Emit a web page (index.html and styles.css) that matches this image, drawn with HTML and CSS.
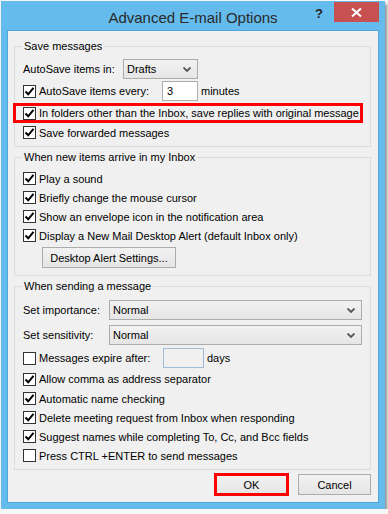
FILE: index.html
```html
<!DOCTYPE html>
<html lang="en">
<head>
    <meta charset="UTF-8">
    <title>Advanced E-mail Options</title>
    <link rel="stylesheet" href="styles.css">
</head>
<body>
    <div class="window">
        <div class="titlebar">
            <span></span>
            <div class="title">Advanced E-mail Options</div>
            <div class="controls">
                <span class="help">?</span>
                <span class="close">
                    <svg width="11" height="9" viewBox="0 0 11 9"><path d="M1 0.5 L10 8.5 M10 0.5 L1 8.5" stroke="#fff" stroke-width="2" fill="none"/></svg>
                </span>
            </div>
        </div>

        <div class="content">
            <fieldset class="group g1">
                <legend>Save messages</legend>
                <div class="row r-select">
                    <span class="lbl w100">AutoSave items in:</span>
                    <span class="select drafts">Drafts<svg class="arrow" width="8" height="5" viewBox="0 0 8 5"><path d="M0.5 0.5 L4 4 L7.5 0.5" stroke="#555" stroke-width="1.8" fill="none"/></svg></span>
                </div>
                <div class="row r-input">
                    <span class="box"><svg width="11" height="11" viewBox="0 0 11 11"><path d="M1.5 5.5 L4.2 8.3 L9.5 1.8" stroke="#000" stroke-width="2" fill="none"/></svg></span>
                    <span class="lbl w123">AutoSave items every:</span>
                    <span class="textbox">3</span>
                    <span class="lbl">minutes</span>
                </div>
                <div class="row highlight">
                    <span class="box"><svg width="11" height="11" viewBox="0 0 11 11"><path d="M1.5 5.5 L4.2 8.3 L9.5 1.8" stroke="#000" stroke-width="2" fill="none"/></svg></span>
                    <span class="lbl">In folders other than the Inbox, save replies with original message</span>
                </div>
                <div class="row">
                    <span class="box"><svg width="11" height="11" viewBox="0 0 11 11"><path d="M1.5 5.5 L4.2 8.3 L9.5 1.8" stroke="#000" stroke-width="2" fill="none"/></svg></span>
                    <span class="lbl">Save forwarded messages</span>
                </div>
            </fieldset>

            <fieldset class="group g2">
                <legend>When new items arrive in my Inbox</legend>
                <div class="row first">
                    <span class="box"><svg width="11" height="11" viewBox="0 0 11 11"><path d="M1.5 5.5 L4.2 8.3 L9.5 1.8" stroke="#000" stroke-width="2" fill="none"/></svg></span>
                    <span class="lbl">Play a sound</span>
                </div>
                <div class="row">
                    <span class="box"><svg width="11" height="11" viewBox="0 0 11 11"><path d="M1.5 5.5 L4.2 8.3 L9.5 1.8" stroke="#000" stroke-width="2" fill="none"/></svg></span>
                    <span class="lbl">Briefly change the mouse cursor</span>
                </div>
                <div class="row">
                    <span class="box"><svg width="11" height="11" viewBox="0 0 11 11"><path d="M1.5 5.5 L4.2 8.3 L9.5 1.8" stroke="#000" stroke-width="2" fill="none"/></svg></span>
                    <span class="lbl">Show an envelope icon in the notification area</span>
                </div>
                <div class="row">
                    <span class="box"><svg width="11" height="11" viewBox="0 0 11 11"><path d="M1.5 5.5 L4.2 8.3 L9.5 1.8" stroke="#000" stroke-width="2" fill="none"/></svg></span>
                    <span class="lbl">Display a New Mail Desktop Alert (default Inbox only)</span>
                </div>
                <div class="btn alert-btn">Desktop Alert Settings...</div>
            </fieldset>

            <fieldset class="group g3">
                <legend>When sending a message</legend>
                <div class="row r-select first">
                    <span class="lbl w86">Set importance:</span>
                    <span class="select wide">Normal<svg class="arrow" width="8" height="5" viewBox="0 0 8 5"><path d="M0.5 0.5 L4 4 L7.5 0.5" stroke="#555" stroke-width="1.8" fill="none"/></svg></span>
                </div>
                <div class="row r-select second">
                    <span class="lbl w86">Set sensitivity:</span>
                    <span class="select wide">Normal<svg class="arrow" width="8" height="5" viewBox="0 0 8 5"><path d="M0.5 0.5 L4 4 L7.5 0.5" stroke="#555" stroke-width="1.8" fill="none"/></svg></span>
                </div>
                <div class="row r-expire">
                    <span class="box"></span>
                    <span class="lbl w124">Messages expire after:</span>
                    <span class="textbox days"></span>
                    <span class="lbl">days</span>
                </div>
                <div class="row r-comma">
                    <span class="box"><svg width="11" height="11" viewBox="0 0 11 11"><path d="M1.5 5.5 L4.2 8.3 L9.5 1.8" stroke="#000" stroke-width="2" fill="none"/></svg></span>
                    <span class="lbl">Allow comma as address separator</span>
                </div>
                <div class="row">
                    <span class="box"><svg width="11" height="11" viewBox="0 0 11 11"><path d="M1.5 5.5 L4.2 8.3 L9.5 1.8" stroke="#000" stroke-width="2" fill="none"/></svg></span>
                    <span class="lbl">Automatic name checking</span>
                </div>
                <div class="row">
                    <span class="box"><svg width="11" height="11" viewBox="0 0 11 11"><path d="M1.5 5.5 L4.2 8.3 L9.5 1.8" stroke="#000" stroke-width="2" fill="none"/></svg></span>
                    <span class="lbl">Delete meeting request from Inbox when responding</span>
                </div>
                <div class="row">
                    <span class="box"><svg width="11" height="11" viewBox="0 0 11 11"><path d="M1.5 5.5 L4.2 8.3 L9.5 1.8" stroke="#000" stroke-width="2" fill="none"/></svg></span>
                    <span class="lbl">Suggest names while completing To, Cc, and Bcc fields</span>
                </div>
                <div class="row">
                    <span class="box"></span>
                    <span class="lbl">Press CTRL +ENTER to send messages</span>
                </div>
            </fieldset>

            <div class="actions">
                <div class="btn ok">OK</div>
                <div class="btn cancel">Cancel</div>
            </div>
        </div>
    </div>
</body>
</html>
```

FILE: styles.css
```css
* {
    margin: 0;
    padding: 0;
    box-sizing: border-box;
}

body {
    font-family: "Liberation Sans", Arial, sans-serif;
    font-size: 11px;
    color: #000;
    background-color: #f7f7f7;
    margin: 0;
    padding: 1px 0 0 1px;
}

.window {
    width: 384px;
    height: 508px;
    background-color: #65bbec;
    padding: 0 6px 6px 6px;
    box-shadow: 2px 3px 3px rgba(0, 0, 0, 0.45);
    display: flex;
    flex-direction: column;
}

.titlebar {
    height: 29px;
    display: grid;
    grid-template-columns: 1fr auto 1fr;
    margin: 0 -6px;
}

.title {
    font-size: 15px;
    color: #2a2a2a;
    line-height: 15px;
    padding-top: 9px;
}

.controls {
    display: flex;
    justify-content: flex-end;
    align-items: flex-start;
    padding-right: 6px;
}

.help {
    font-weight: bold;
    font-size: 13px;
    color: #222;
    line-height: 13px;
    margin-top: 6px;
    margin-right: 11px;
}

.close {
    width: 45px;
    height: 20px;
    margin-top: 1px;
    background-color: #c75050;
    display: flex;
    align-items: center;
    justify-content: center;
}

.content {
    flex: 1;
    background-color: #f0f0f0;
    border: 1px solid #4ea5d9;
    padding: 8px 7px 0 6px;
}

.group {
    border: 1px solid #dcdcdc;
    padding: 0 0 0 8px;
    min-width: 0;
}

.group legend {
    margin-left: -1px;
    padding: 0 2px;
    line-height: 14px;
}

.g1 {
    padding-bottom: 4px;
}

.g2 {
    margin-top: 3px;
    padding-bottom: 7px;
}

.g3 {
    margin-top: 3px;
    padding-bottom: 4px;
}

.row {
    display: flex;
    align-items: center;
    height: 19px;
    white-space: nowrap;
}

.row.first {
    margin-top: 5px;
}

.r-select {
    height: 22px;
    margin-top: 5px;
}

.r-select.first {
    margin-top: 6px;
}

.r-select.second {
    margin-top: 3px;
}

.r-input {
    height: 22px;
}

.r-expire {
    height: 22px;
    margin-top: 1px;
}

.r-comma {
    height: 20px;
}

.highlight {
    height: 20px;
    margin: 1px 7px 0 -10px;
    padding-left: 7px;
    border: 3px solid #ff0000;
}

.lbl {
    line-height: 14px;
}

.w100 {
    width: 100px;
}

.w123 {
    width: 123px;
}

.w124 {
    width: 124px;
}

.w86 {
    width: 86px;
}

.box {
    width: 13px;
    height: 13px;
    border: 1px solid #333;
    background-color: #fff;
    margin-right: 3px;
    flex-shrink: 0;
    display: flex;
}

.select {
    height: 20px;
    border: 1px solid #acacac;
    background: linear-gradient(#f2f2f2, #e5e5e5);
    display: flex;
    align-items: center;
    justify-content: space-between;
    padding: 0 6px 0 3px;
}

.drafts {
    width: 75px;
}

.wide {
    width: 253px;
}

.textbox {
    width: 36px;
    height: 20px;
    border: 1px solid #abadb3;
    background-color: #fff;
    padding-left: 4px;
    line-height: 18px;
    margin-right: 3px;
}

.textbox.days {
    width: 41px;
    height: 20px;
    background-color: #f0f0f0;
    border-color: #9fbcd8;
}

.btn {
    height: 21px;
    border: 1px solid #acacac;
    background: linear-gradient(#f2f2f2, #e5e5e5);
    display: flex;
    align-items: center;
    justify-content: center;
}

.alert-btn {
    width: 134px;
    margin: 2px 0 0 19px;
}

.actions {
    display: flex;
    justify-content: flex-end;
    align-items: center;
    gap: 9px;
    margin-top: 3px;
}

.ok {
    width: 75px;
    height: 23px;
    border: 3px solid #ff0000;
}

.cancel {
    width: 73px;
    height: 21px;
}
```
